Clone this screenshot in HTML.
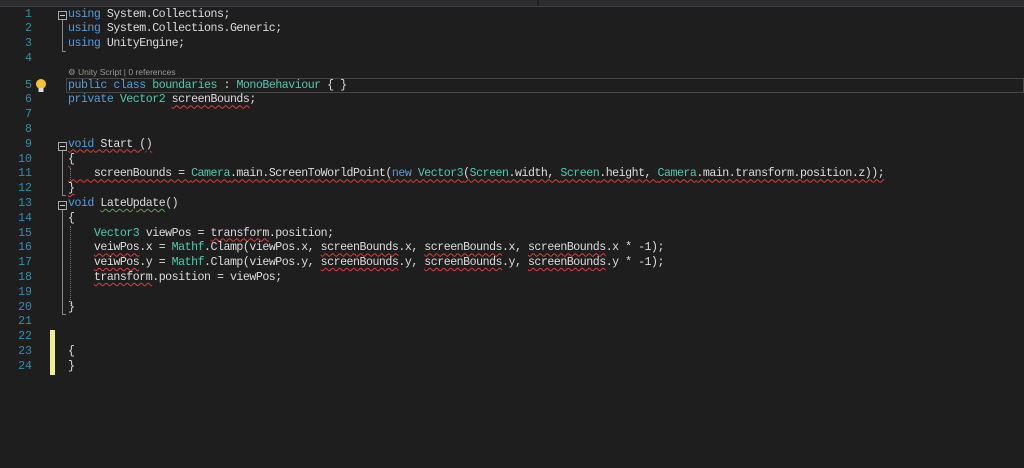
<!DOCTYPE html>
<html><head><meta charset="utf-8"><style>
body{margin:0;width:1024px;height:468px;background:#1e1e1e;overflow:hidden;position:relative;font-family:"Liberation Mono",monospace;}
.top{position:absolute;left:0;top:0;width:1024px;height:6px;background:#2d2d30;border-bottom:1px solid #3f3f46}
.top .sep{position:absolute;left:537px;top:0;width:2px;height:6px;background:#1e1e1e}
.blk{position:absolute;left:0;font-size:11.6px;letter-spacing:-0.48px;line-height:14.8px;color:#dcdcdc;white-space:pre}
.ln{position:absolute;left:0;width:32px;text-align:right;color:#2b91af;letter-spacing:0}
.c{position:absolute;left:68px}
.k{color:#569cd6}.t{color:#4ec9b0}.m{color:#dcdcaa}
.sq{text-decoration:underline wavy #e03c3c;text-decoration-thickness:1px;text-underline-offset:2px}
.sg{text-decoration:underline wavy #6a9955;text-decoration-thickness:1px;text-underline-offset:2px}
.box{position:absolute;width:7px;height:7px;border:1px solid #aaa;left:58px}
.box:after{content:"";position:absolute;left:1px;top:3px;width:5px;height:1px;background:#ccc}
.vl{position:absolute;left:62px;border-left:1px solid #888}
.dl{position:absolute;left:70px;border-left:1px dotted #777}
.yb{position:absolute;left:50px;top:330px;width:5px;height:45px;background:#efef8f}
.lens{position:absolute;left:68px;top:67px;font-family:"Liberation Sans",sans-serif;font-size:8.5px;color:#999}
.hl{position:absolute;left:66px;top:78px;width:958px;height:15px;border:1px solid #464646;box-sizing:border-box}
</style></head><body>
<div class="top"><div class="sep"></div></div>
<div class="hl"></div>
<div class="blk" style="top:7.5px;height:60px">
<div class="ln" style="top:0">1</div><div class="c" style="top:0"><span class="k">using</span> System.Collections;</div>
<div class="ln" style="top:14.8px">2</div><div class="c" style="top:14.8px"><span class="k">using</span> System.Collections.Generic;</div>
<div class="ln" style="top:29.6px">3</div><div class="c" style="top:29.6px"><span class="k">using</span> UnityEngine;</div>
<div class="ln" style="top:44.4px">4</div>
</div>
<div class="box" style="top:11px"></div><div class="vl" style="top:20px;height:32px"></div><div style="position:absolute;left:62px;top:51px;width:4px;border-top:1px solid #888"></div>
<div class="lens">⚙ Unity Script | 0 references</div>
<svg style="position:absolute;left:34px;top:78px" width="14" height="16" viewBox="0 0 14 16"><circle cx="7" cy="6" r="5" fill="#f6c12b"/><rect x="4.5" y="10" width="5" height="4" fill="#ddd"/></svg>
<div class="blk" style="top:78.5px;width:1024px;height:300px">
<div class="ln" style="top:0">5</div><div class="c" style="top:0"><span class="k">public</span> <span class="k">class</span> <span class="t">boundaries</span> : <span class="t">MonoBehaviour</span> { }</div>
<div class="ln" style="top:14.8px">6</div><div class="c" style="top:14.8px"><span class="k">private</span> <span class="t">Vector2</span> <span class="sq">screenBounds</span>;</div>
<div class="ln" style="top:29.6px">7</div>
<div class="ln" style="top:44.4px">8</div>
<div class="ln" style="top:59.2px">9</div><div class="c" style="top:59.2px"><span class="sq"><span class="k">void</span> Start ()</span></div>
<div class="ln" style="top:74px">10</div><div class="c" style="top:74px"><span class="sq">{</span></div>
<div class="ln" style="top:88.8px">11</div><div class="c" style="top:88.8px"><span class="sq">    screenBounds = <span class="t">Camera</span>.main.ScreenToWorldPoint(<span class="k">new</span> <span class="t">Vector3</span>(<span class="t">Screen</span>.width, <span class="t">Screen</span>.height, <span class="t">Camera</span>.main.transform.position.z));</span></div>
<div class="ln" style="top:103.6px">12</div><div class="c" style="top:103.6px"><span class="sq">}</span></div>
<div class="ln" style="top:118.4px">13</div><div class="c" style="top:118.4px"><span class="k">void</span> <span class="sg">LateUpdate</span>()</div>
<div class="ln" style="top:133.2px">14</div><div class="c" style="top:133.2px">{</div>
<div class="ln" style="top:148px">15</div><div class="c" style="top:148px">    <span class="t">Vector3</span> viewPos = <span class="sq">transform</span>.position;</div>
<div class="ln" style="top:162.8px">16</div><div class="c" style="top:162.8px">    <span class="sq">veiwPos</span>.x = <span class="t">Mathf</span>.Clamp(viewPos.x, <span class="sq">screenBounds</span>.x, <span class="sq">screenBounds</span>.x, <span class="sq">screenBounds</span>.x * -1);</div>
<div class="ln" style="top:177.6px">17</div><div class="c" style="top:177.6px">    <span class="sq">veiwPos</span>.y = <span class="t">Mathf</span>.Clamp(viewPos.y, <span class="sq">screenBounds</span>.y, <span class="sq">screenBounds</span>.y, <span class="sq">screenBounds</span>.y * -1);</div>
<div class="ln" style="top:192.4px">18</div><div class="c" style="top:192.4px">    <span class="sq">transform</span>.position = viewPos;</div>
<div class="ln" style="top:207.2px">19</div>
<div class="ln" style="top:222px">20</div><div class="c" style="top:222px">}</div>
<div class="ln" style="top:236.8px">21</div>
<div class="ln" style="top:251.6px">22</div>
<div class="ln" style="top:266.4px">23</div><div class="c" style="top:266.4px">{</div>
<div class="ln" style="top:281.2px">24</div><div class="c" style="top:281.2px">}</div>
</div>
<div class="box" style="top:142px"></div><div class="vl" style="top:151px;height:44px"></div><div style="position:absolute;left:62px;top:195px;width:4px;border-top:1px solid #888"></div>
<div class="box" style="top:201px"></div><div class="vl" style="top:210px;height:104px"></div><div style="position:absolute;left:62px;top:314px;width:4px;border-top:1px solid #888"></div>
<div class="dl" style="top:168px;height:14px"></div>
<div class="dl" style="top:226px;height:80px"></div>
<div class="yb"></div>
</body></html>
